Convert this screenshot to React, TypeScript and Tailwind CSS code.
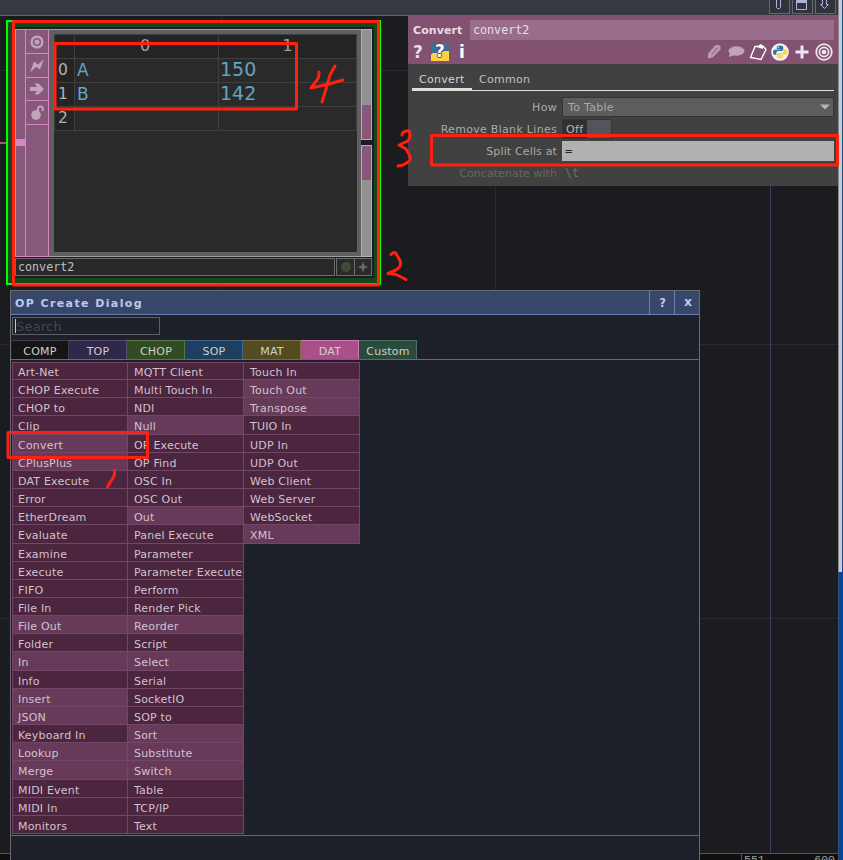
import type { ReactNode } from "react";
import clsx from "clsx";

// ---------------------------------------------------------------------------
// Network editor with one DAT node, its parameter panel and the OP Create
// dialog. The red marks on top are the numbered tutorial annotations.
// ---------------------------------------------------------------------------

type Op = { name: string; filter?: boolean };

const f = (name: string): Op => ({ name, filter: true });
const g = (name: string): Op => ({ name });

const COLUMNS: Op[][] = [
  [
    g("Art-Net"), g("CHOP Execute"), g("CHOP to"), g("Clip"), f("Convert"),
    f("CPlusPlus"), g("DAT Execute"), g("Error"), g("EtherDream"), g("Evaluate"),
    g("Examine"), g("Execute"), g("FIFO"), g("File In"), f("File Out"),
    g("Folder"), f("In"), g("Info"), f("Insert"), f("JSON"), g("Keyboard In"),
    f("Lookup"), f("Merge"), g("MIDI Event"), g("MIDI In"), g("Monitors"),
  ],
  [
    g("MQTT Client"), g("Multi Touch In"), g("NDI"), f("Null"), g("OP Execute"),
    g("OP Find"), g("OSC In"), g("OSC Out"), f("Out"), g("Panel Execute"),
    g("Parameter"), g("Parameter Execute"), g("Perform"), g("Render Pick"),
    f("Reorder"), g("Script"), f("Select"), g("Serial"), g("SocketIO"),
    g("SOP to"), f("Sort"), f("Substitute"), f("Switch"), g("Table"),
    g("TCP/IP"), g("Text"),
  ],
  [
    g("Touch In"), f("Touch Out"), f("Transpose"), g("TUIO In"), g("UDP In"),
    g("UDP Out"), g("Web Client"), g("Web Server"), g("WebSocket"), f("XML"),
  ],
];

// the list is 471px over 26 rows, these rows take the leftover pixels
const TALL_ROWS = [3, 9, 16, 22];

const FAMILIES = [
  { name: "COMP", style: "bg-[#151515] border-[#3d3d42]" },
  { name: "TOP", style: "bg-[#30284a] border-[#554d70]" },
  { name: "CHOP", style: "bg-[#334b22] border-[#5a7548]" },
  { name: "SOP", style: "bg-[#1f3f60] border-[#42658a]" },
  { name: "MAT", style: "bg-[#544c20] border-[#7a7245]" },
  { name: "DAT", style: "bg-[#a9508b] border-[#cf7ab2]" },
  { name: "Custom", style: "bg-[#2a4b3c] border-[#4b705f]" },
];

function PythonLogo({ className }: { className?: string }) {
  return (
    <svg viewBox="0 0 18 18" className={className}>
      <circle cx="9" cy="9" r="8.8" fill="#f4f2f2" />
      <path
        d="M8.8 2.5c-2.3 0-3 .8-3 2v1.4h3.4v.6H4.3C2.9 6.5 2 7.6 2 9.2s.8 2.6 2 2.6h1.3V10c0-1.1.9-2 2-2h3.3c1 0 1.7-.8 1.7-1.7V4.500c0-1.200-1.200-2-3.500-2z"
        fill="#3272a5"
      />
      <path
        d="M9.300 15.600c2.300 0 3-.8 3-2v-1.400H8.900v-.6h4.900c1.400 0 2.300-1.100 2.300-2.700s-.8-2.600-2-2.600h-1.300v1.800c0 1.100-.9 2-2 2H7.500c-1 0-1.700.8-1.700 1.700v1.800c0 1.200 1.200 2 3.500 2z"
        fill="#ffd23f"
      />
      <circle cx="7.300" cy="4.300" r=".7" fill="#f4f2f2" />
      <circle cx="10.800" cy="13.800" r=".7" fill="#f4f2f2" />
    </svg>
  );
}

function TopBar() {
  return (
    <div className="flex h-4 shrink-0 justify-end gap-[2px] border-b border-[#64666a] bg-[#363941] pr-[2px]">
      <div className="flex h-[14px] w-[21px] justify-center border border-t-0 border-[#66686e] bg-[#30333c] pr-[3px]">
        <svg width="8" height="12" fill="none" stroke="#a9b6d6">
          <path d="M2.500 0v7.500l1 1h2l1-1V0" />
        </svg>
      </div>
      <div className="flex h-[14px] w-[21px] justify-center border border-t-0 border-[#66686e] bg-[#30333c] pr-[2px]">
        <svg width="11" height="12" fill="none" stroke="#a9b6d6">
          <path d="M.5 0v9.500h10V0" />
          <path d="M0 1.500h11" strokeWidth="3" />
        </svg>
      </div>
      <div className="flex h-[14px] w-[21px] justify-center border border-t-0 border-[#66686e] bg-[#30333c] pr-[2px]">
        <svg width="11" height="12" fill="none" stroke="#a9b6d6">
          <path d="M3.500 0v4.500h-2l4 4 4-4h-2V0" />
        </svg>
      </div>
    </div>
  );
}

function Grid() {
  return (
    <svg className="absolute inset-0" width="838" height="844">
      <g stroke="#2a2a36">
        <path d="M0 54.500H838M0 328.500H838M0 602.500H838" />
        <path d="M221.500 0V844M495.500 0V844" />
      </g>
      <path d="M770.500 0V837" stroke="#413a68" />
      <path d="M0 127H14" stroke="#a05a8a" strokeWidth="2" />
    </svg>
  );
}

function FlagCell({ children }: { children: ReactNode }) {
  return (
    <div className="flex h-[23.750px] items-center justify-center border-b border-[#d886c4] pt-[1px]">
      <svg width="16" height="16" viewBox="0 0 16 16" fill="#c3a2bb">
        {children}
      </svg>
    </div>
  );
}

function ScrollThumb({ flip }: { flip?: boolean }) {
  return (
    <div
      className={clsx(
        "flex border border-[#b1b1b1]",
        flip ? "h-[112px] flex-col-reverse" : "h-[111px] flex-col",
      )}
    >
      <div className="flex-1 bg-[#929292]" />
      <div className="h-[34px] bg-[#87587b]" />
    </div>
  );
}

function DatTable() {
  const rows = [["0", "A", "150"], ["1", "B", "142"], ["2", "", ""]];
  return (
    <div className="h-[218px] w-[303px] bg-[#2a2a2a]">
      <div className="flex h-6 border border-b-0 border-[#3f3f3f] bg-[#242424] text-[16px] leading-[21px] text-[#a0a0a0]">
        <div className="w-5 border-r border-[#3f3f3f]" />
        <div className="w-[144px] border-r border-[#3f3f3f] pr-[3px] text-center">0</div>
        <div className="flex-1 text-center">1</div>
      </div>
      {rows.map(([index, key, value]) => (
        <div
          key={index}
          className={clsx(
            "flex h-6 border border-b-0 border-[#3f3f3f] text-[#62a5c2]",
            index === "2" && "h-[25px]! border-b!",
          )}
        >
          <div className="w-5 border-r border-[#3f3f3f] bg-[#242424] pl-[3px] text-[15.500px] leading-[22px] text-[#b0b0b0]">
            {index}
          </div>
          <div className="w-[144px] border-r border-[#3f3f3f] pl-[2px] text-[17px] leading-[23px]">{key}</div>
          <div className="flex-1 pl-[1px] text-[19px] leading-[21px]">{value}</div>
        </div>
      ))}
    </div>
  );
}

function ConvertNode() {
  return (
    <div className="absolute left-[6px] top-1 h-[265px] w-[375px] border-2 border-[#00ff00] bg-[#15461c] p-[5px]">
      <div className="flex h-[251px] w-[361px] flex-col gap-[1px] bg-[#1b1e20] pl-[2px] pt-[2px]">
        <div className="flex h-[228px] w-[357px] shrink-0">
          <div className="h-full w-[11px] border border-[#d886c4] bg-[#87587b] pt-[109px]">
            <div className="h-[7px] bg-[#d886c4]" />
          </div>
          <div className="h-full w-[23px] border-y border-r border-[#d886c4] bg-[#87587b]">
            <FlagCell>
              <circle cx="8" cy="8" r="5.300" fill="none" stroke="#c3a2bb" strokeWidth="2.500" />
              <circle cx="8" cy="8" r="2.500" />
            </FlagCell>
            <FlagCell>
              <path d="M1 14.500 5 3.500 9 6.500 15 1 11 11.500 7 9z" />
            </FlagCell>
            <FlagCell>
              <path d="M1 6h7L5.500 2.500h4L15 8l-5.500 5.500h-4L8 10H1z" />
            </FlagCell>
            <FlagCell>
              <circle cx="7" cy="10" r="4.800" />
              <path d="M9 7V4a2.400 2.400 0 0 1 4.800 0v2" fill="none" stroke="#c3a2bb" strokeWidth="2" />
            </FlagCell>
          </div>
          <div className="h-full w-[312px] border-y border-t-[#a0a0a0] border-b-[#a0a0a0] bg-[#5f5f5f] pl-[5px] pt-1">
            <DatTable />
          </div>
          <div className="flex h-full w-[11px] flex-col justify-between">
            <ScrollThumb />
            <ScrollThumb flip />
          </div>
        </div>
        <div className="flex h-[18px] w-[357px] shrink-0 gap-[1px]">
          <div className="flex-1 border border-[#6b6d6f] bg-[#262829] pl-[2px] font-['DejaVu_Sans_Mono',monospace] text-[11.700px] leading-[17px] text-[#c0c0c0]">
            convert2
          </div>
          <div className="flex w-[36px] border border-[#6b6d6f] bg-[#2a2a2a]">
            <div className="flex w-[18px] items-center justify-center border-r border-[#6b6d6f]">
              <div className="size-[10px] rounded-full bg-[#414c36]" />
            </div>
            <svg width="16" height="16" viewBox="0 0 16 16" fill="#686868">
              <path d="M8 2.500 9.500 6.500 13.500 8 9.500 9.500 8 13.500 6.500 9.500 2.500 8 6.500 6.500z" />
            </svg>
          </div>
        </div>
      </div>
    </div>
  );
}

function ParamRow({ label, style, children }: { label: string; style?: string; children: ReactNode }) {
  return (
    <div className="flex h-[22px] items-center text-[#a9a9a9]">
      <div className={clsx("w-[150px] pr-[5px] pt-[2px] text-right", style)}>{label}</div>
      {children}
    </div>
  );
}

function ParameterPanel() {
  return (
    <div className="absolute left-[408px] top-0 h-[170px] w-[430px] bg-[#414141] text-[11px] tracking-[0.3px]">
      <div className="h-12 bg-[#835270] pt-1">
        <div className="flex h-5 pr-1">
          <div className="w-[62px] pl-[5px] text-[11px] font-bold leading-[22px] tracking-[0.1px] text-[#e8dce5]">Convert</div>
          <div className="flex-1 bg-[#9b6d8c] pl-[3px] font-['DejaVu_Sans_Mono',monospace] text-[11.700px] leading-[20px] tracking-normal text-[#eadfe8]">
            convert2
          </div>
        </div>
        <div className="flex h-6 items-center pl-[5px] pr-[5px] text-[17px] font-bold text-[#eadde6]">
          <div className="w-[18px] pt-[2px]">?</div>
          <div className="flex h-[18px] w-[18px] items-center justify-center bg-[linear-gradient(170deg,#3470a0_50%,#ffd040_51%)] text-white [text-shadow:1px_0_#67405b,-1px_0_#67405b,0_1px_#67405b,0_-1px_#67405b]">
            ?
          </div>
          <div className="pl-[10px] pt-[2px] text-white">i</div>
          <div className="ml-auto flex items-center gap-1">
            <svg width="18" height="18" viewBox="0 0 18 18" fill="#b998b0">
              <path d="M3 10.500 10.500 2h3.500l1.500 1.500v3L7.500 14.500 3 15.500z" />
              <path d="M6.500 11.500 12.500 5" stroke="#835270" />
            </svg>
            <svg width="18" height="18" viewBox="0 0 18 18" fill="#c4a2bb">
              <ellipse cx="9.500" cy="8" rx="8" ry="4.700" />
              <path d="M3 9 2 14 8 12z" />
            </svg>
            <svg width="18" height="18" viewBox="0 0 18 18" fill="none" stroke="#fff" strokeWidth="1.400">
              <path d="M6 3.500 1.500 14.500 12 16.500 17 6.500 14.500 3.500z" />
              <path d="M8 4 11.500 1l2.500 1.500v3.500z" fill="#fff" stroke="none" />
            </svg>
            <PythonLogo className="size-[18px]" />
            <svg width="18" height="18" viewBox="0 0 18 18" stroke="#f0e8ee" strokeWidth="3">
              <path d="M9 2.500v13M2.500 9h13" />
            </svg>
            <svg width="18" height="18" viewBox="0 0 18 18" fill="none" stroke="#f0e8ee" strokeWidth="1.700">
              <circle cx="9" cy="9" r="7.800" />
              <circle cx="9" cy="9" r="4.600" />
              <circle cx="9" cy="9" r="1.500" fill="#f0e8ee" />
            </svg>
          </div>
        </div>
      </div>
      <div className="mx-1 flex h-[27px] border-b border-[#dedede] text-[#d4d4d4]">
        <div className="h-[27px] w-[60px] border-b-[3px] border-[#dedede] pl-[7px] pt-2">Convert</div>
        <div className="pl-[7px] pt-2 text-[#c0c0c0]">Common</div>
      </div>
      <div className="pl-1 pr-1 pt-[5px]">
        <ParamRow label="How">
          <div className="flex h-5 flex-1 items-center justify-between border border-[#343434] bg-[#5d5d5d] pl-[5px] pr-[3px]">
            <span className="pt-[2px]">To Table</span>
            <svg width="10" height="6" fill="#b5b5b5">
              <path d="M0 .5h10l-5 5z" />
            </svg>
          </div>
        </ParamRow>
        <ParamRow label="Remove Blank Lines">
          <div className="flex h-5 w-[50px] border border-[#353535] bg-[#303030]">
            <div className="w-6 pl-[3px] leading-[20px] text-[#b9b9b9]">Off</div>
            <div className="flex-1 bg-[#54545b]" />
          </div>
        </ParamRow>
        <ParamRow label="Split Cells at" style="tracking-[0.15px]">
          <div className="h-5 flex-1 bg-[#b1b1b1] pl-[3px] font-['DejaVu_Sans_Mono',monospace] text-[12px] leading-[20px] text-[#202020]">=</div>
        </ParamRow>
        <ParamRow label="Concatenate with" style="tracking-[0.050px] text-[#666666]">
          <div className="pl-[3px] pt-[1px] font-['DejaVu_Sans_Mono',monospace] text-[11.700px] tracking-normal text-[#707070]">\t</div>
        </ParamRow>
      </div>
    </div>
  );
}

function CreateDialog() {
  return (
    <div className="absolute left-[10px] top-[274px] flex h-[570px] w-[690px] flex-col border border-b-0 border-[#676b70] bg-[#1d2028]">
      <div className="flex h-6 shrink-0 border-b border-[#6a7fb0] bg-[#384769] text-[11.500px] font-bold leading-[24px] text-[#bccaea]">
        <div className="flex-1 pl-1 text-[11px] leading-[25px] tracking-[1.400px]">OP Create Dialog</div>
        <div className="w-[25px] border-l border-[#6a7fb0] pl-[1px] text-center">?</div>
        <div className="w-[25px] border-l border-[#6a7fb0] pl-[2px] text-center text-[12.500px] leading-[22px]">x</div>
      </div>
      <div className="ml-[1px] mt-[2px] h-[18px] w-[148px] shrink-0 border border-[#5c6068] p-[1px]">
        <div className="ml-[1px] h-full border-l border-[#bccaea] text-[13px] leading-[15px] tracking-[0.2px] text-[#434650]">Search</div>
      </div>
      <div className="mt-[5px] flex h-5 shrink-0 border-b border-[#676b70] pl-[1px] text-[11px] leading-[21px] tracking-[0.2px] text-[#ccd0cf]">
        {FAMILIES.map(({ name, style }, i) => (
          <div
            key={name}
            className={clsx("border-r border-t text-center", i ? "w-[58px] pl-[1px]" : "w-[57px]", style)}
          >
            {name}
          </div>
        ))}
      </div>
      <div className="flex h-[476px] shrink-0 items-start border-b border-[#676b70] pl-[1px] pt-[2px] text-[11px] text-[#d2c2cd]">
        {COLUMNS.map((ops, c) => (
          <div
            key={ops[0].name}
            className={clsx("w-[116px] border-b border-r border-[#734667]", !c && "border-l")}
          >
            {ops.map(({ name, filter }, i) => (
              <div
                key={name}
                className={clsx(
                  "overflow-hidden whitespace-nowrap border-t border-[#734667] tracking-[0.2px]",
                  c ? "pl-[6px]" : "pl-[5px]",
                  i === 0 ? "h-[17px] leading-[20px]" : "leading-[21px]",
                  i > 0 && (TALL_ROWS.includes(i) ? "h-[19px]" : "h-[18px]"),
                  filter ? "bg-[#683a59]" : "bg-[#4c253f]",
                )}
              >
                {name}
              </div>
            ))}
          </div>
        ))}
      </div>
    </div>
  );
}

function Timeline() {
  return (
    <div className="absolute inset-x-0 bottom-0 flex h-[7px] justify-end overflow-hidden border-t border-[#555555] bg-[#101010] pr-[3px] font-['Liberation_Mono',monospace] text-[11.500px] leading-[12px] text-[#a0a0a0]">
      <div className="flex w-[94px] justify-between border-l border-[#555555] pl-[2px]">
        <span>551</span>
        <span>600</span>
      </div>
    </div>
  );
}

// tutorial marks: one frame and one handwritten numeral per step
function Annotations() {
  return (
    <svg
      className="pointer-events-none absolute inset-0"
      width="843"
      height="860"
      fill="none"
      stroke="#ff2010"
      strokeWidth="3"
      strokeLinecap="round"
      strokeLinejoin="round"
    >
      <rect x="13.500" y="21.500" width="365" height="263.500" />
      <rect x="55" y="43.500" width="241.500" height="65.500" />
      <rect x="431.500" y="135.500" width="406" height="29.500" />
      <rect x="8" y="432.500" width="139.500" height="25" />
      <path d="M114.500 470c.5 5-1 8-3 10l-4 7" />
      <path d="M391 254.500c2-2 4-3 5-1l4 7c2 5-1 8-5 10l-7 3 8 1 10 5" />
      <path d="M402 135c0-2 2-4 5-4 3-1 3 2 3 6l-2 4-9 4 7 4 4 7c1 4 0 5-2 6l-5 3-5 1" />
      <path d="M319 72c0 3 0 6-2 8l-6 8 18-4 14-4M335 66l-5 9-4 14-4 13" />
    </svg>
  );
}

export default function App() {
  return (
    <div className="relative flex h-[860px] w-[843px] overflow-hidden bg-[#1b1c20] font-['DejaVu_Sans',sans-serif]">
      <div className="flex w-[838px] flex-col">
        <TopBar />
        <div className="relative flex-1">
          <Grid />
          <ConvertNode />
          <ParameterPanel />
          <Timeline />
          <CreateDialog />
        </div>
      </div>
      <div className="flex w-[5px] flex-col">
        <div className="h-[572px] border-l border-r border-l-[#888888] border-r-[#1f4d8c] bg-[#cccccc]" />
        <div className="flex-1 border-l border-[#35506e] bg-[#0845a0]" />
      </div>
      <Annotations />
    </div>
  );
}
